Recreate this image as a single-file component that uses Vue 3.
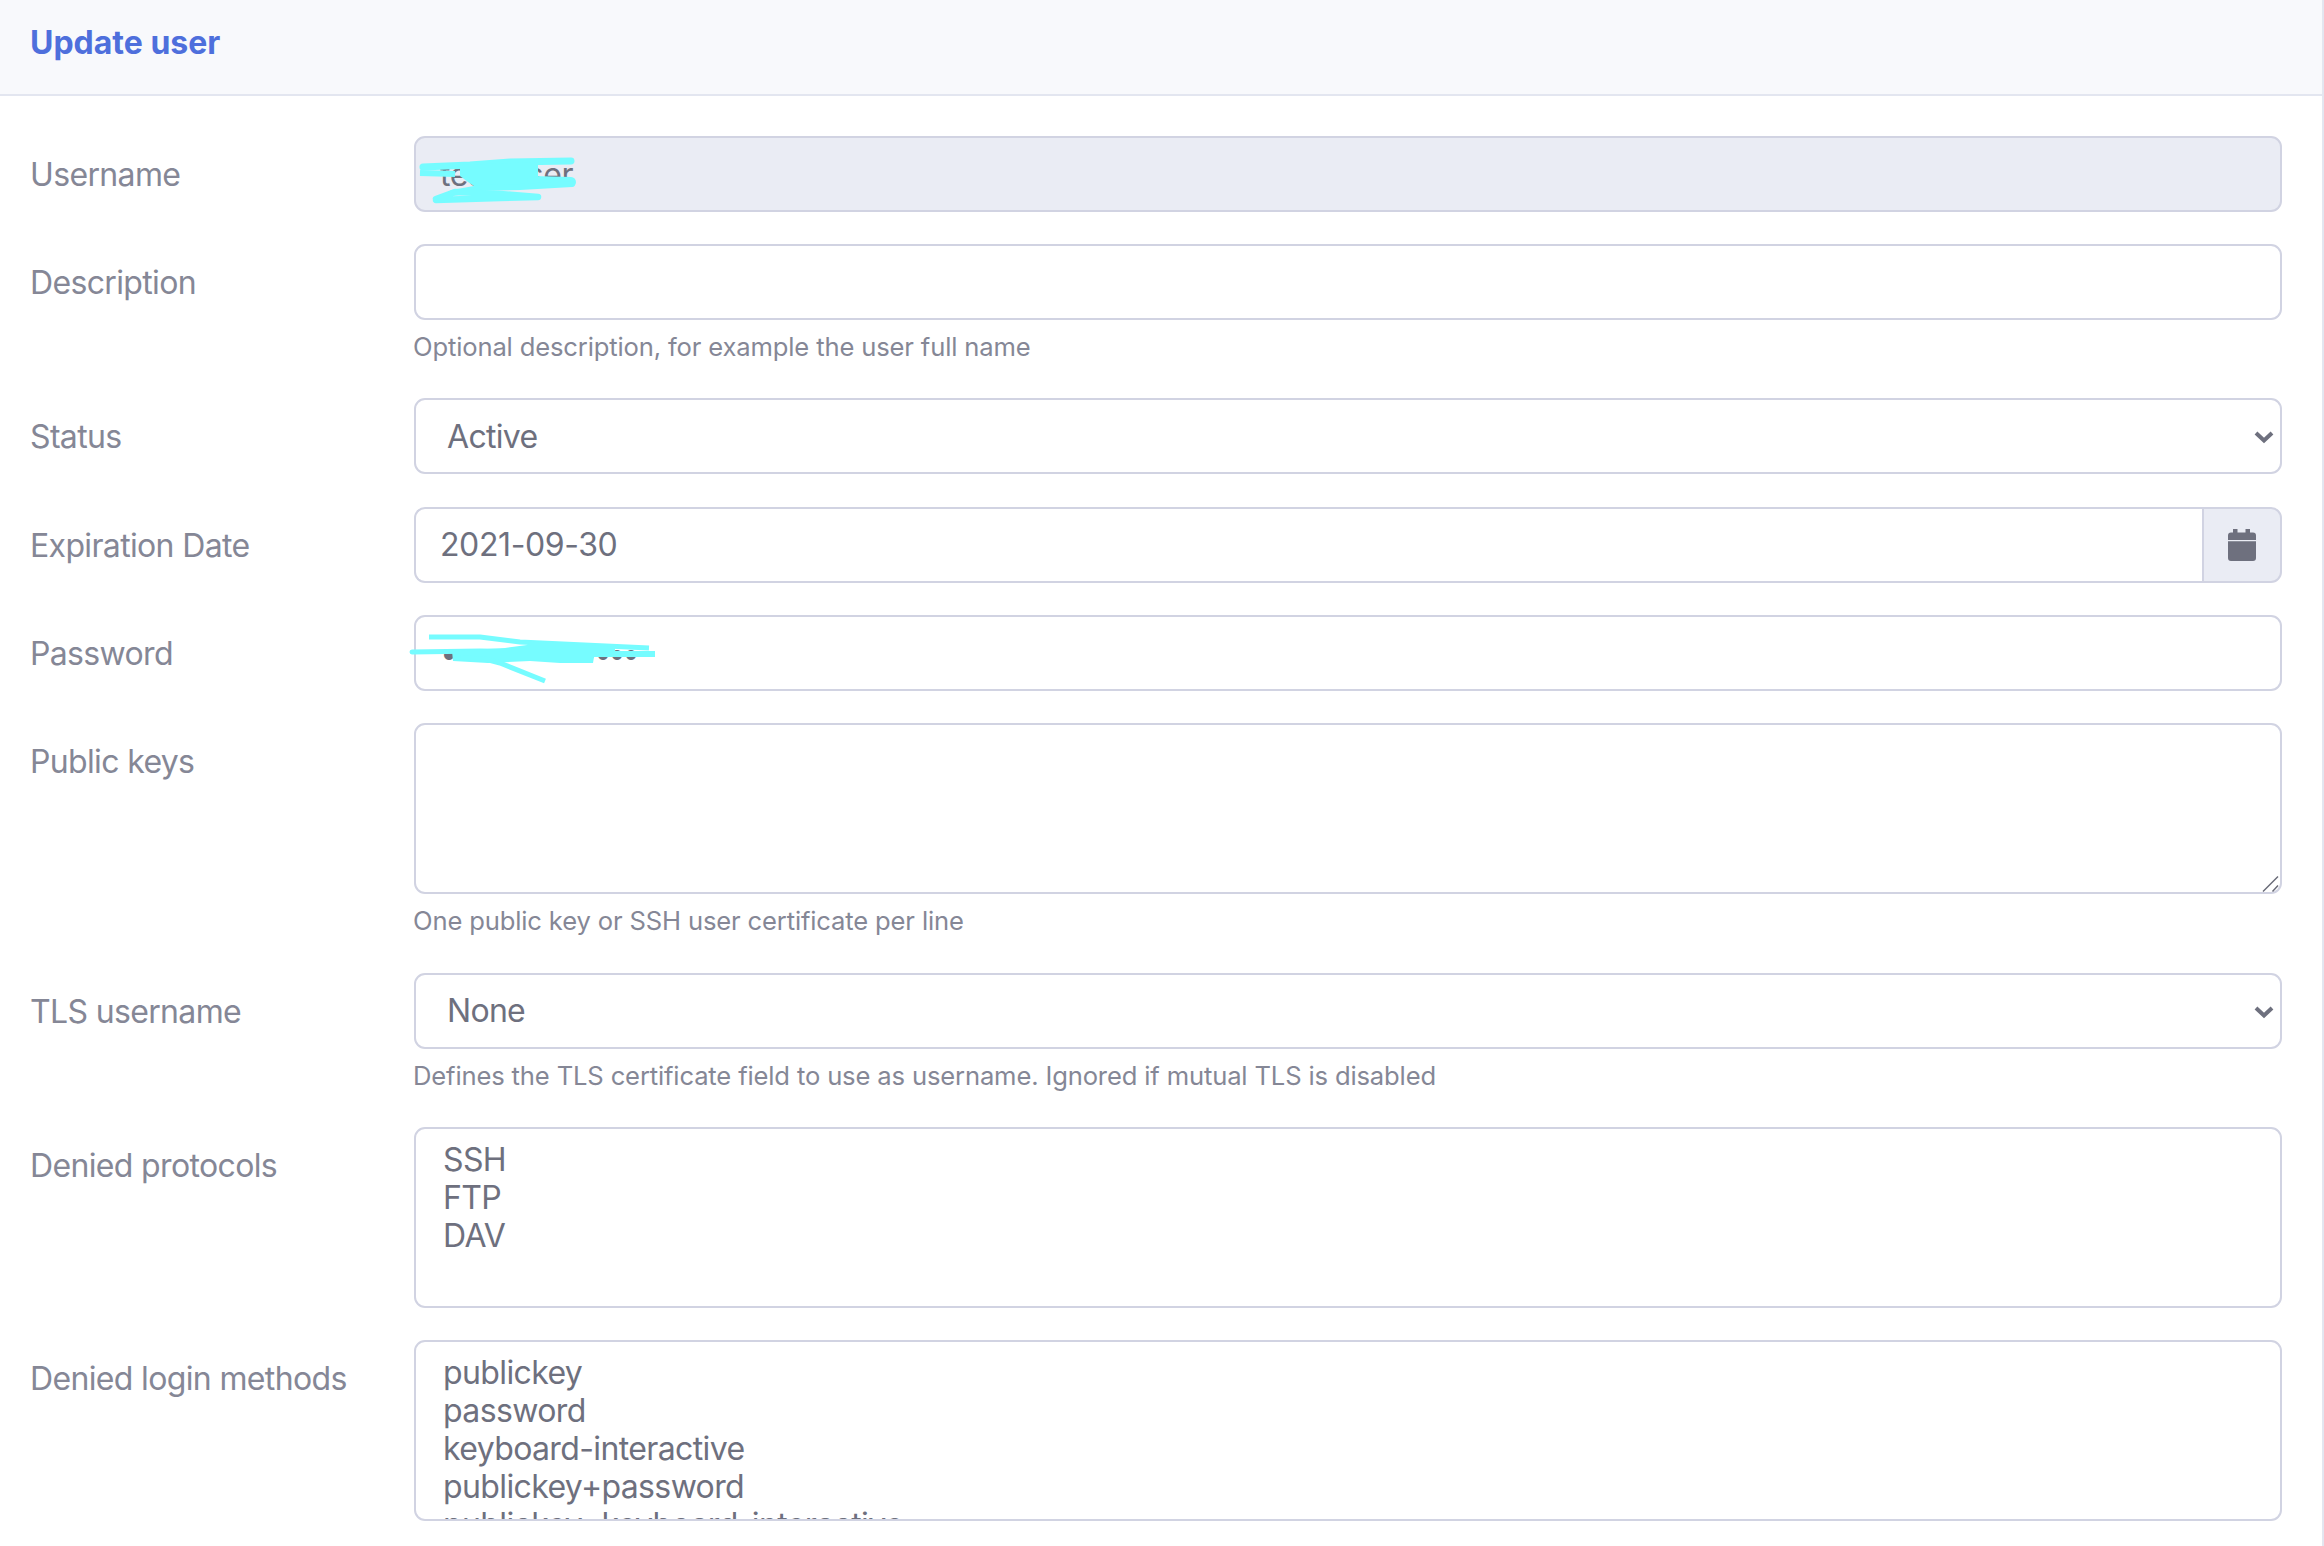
<script setup>
const loginMethods = ['publickey', 'password', 'keyboard-interactive', 'publickey+password', 'publickey+keyboard-interactive']
const protocols = ['SSH', 'FTP', 'DAV']
</script>

<template>
  <div class="card">
    <header class="card-header">
      <h1 class="card-title">Update user</h1>
    </header>
    <form class="card-body" @submit.prevent>
      <div class="row">
        <label class="label">Username</label>
        <div class="field">
          <div class="overlay-host">
            <input class="control readonly" type="text" value="test-user" readonly />
            <svg class="scribble" width="180" height="60" viewBox="0 0 180 60" aria-hidden="true">
              <g fill="none" stroke="#76fcff" stroke-linecap="round" stroke-linejoin="round">
                <path stroke-width="7" d="M13 17 L60 15 L100 12 L161 11" />
                <path stroke-width="6" stroke-linecap="butt" d="M10 23 L45 24" />
                <path fill="#76fcff" stroke="none" d="M50 15 L128 12 L128 36 L64 36 L58 32 L50 26Z" />
                <path stroke-width="10" d="M122 31 L161 32" />
                <path stroke-width="6" d="M162 34 L110 37 L70 38 L42 43" />
                <path stroke-width="6.500" d="M26 49 L45 42 L90 44 L128 47 L90 48 L26 50" />
              </g>
            </svg>
          </div>
        </div>
      </div>

      <div class="row">
        <label class="label">Description</label>
        <div class="field">
          <input class="control" type="text" />
          <small class="help">Optional description, for example the user full name</small>
        </div>
      </div>

      <div class="row">
        <label class="label">Status</label>
        <div class="field">
          <div class="overlay-host">
            <select class="control select"><option>Active</option></select>
            <svg class="chevron" width="20" height="14" viewBox="0 0 20 14" aria-hidden="true">
              <path d="M2 3 L10 10.5 L18 3" fill="none" stroke="#6e707e" stroke-width="4" />
            </svg>
          </div>
        </div>
      </div>

      <div class="row">
        <label class="label">Expiration Date</label>
        <div class="field">
          <div class="input-group">
            <input class="control group-input" type="text" value="2021-09-30" />
            <div class="append">
              <svg width="28" height="32" viewBox="0 0 28 32" aria-hidden="true">
                <path fill="#6e707e" d="M5 0h4.5v3.5h8V0H22v3.5h3a3 3 0 0 1 3 3V11H0V6.500a3 3 0 0 1 3-3h2zM0 12.300h28V29a3 3 0 0 1-3 3H3a3 3 0 0 1-3-3z" />
              </svg>
            </div>
          </div>
        </div>
      </div>

      <div class="row">
        <label class="label">Password</label>
        <div class="field">
          <div class="overlay-host">
            <input class="control password" type="password" value="password123456" />
            <svg class="scribble scribble-pass" width="270" height="66" viewBox="0 0 270 66" aria-hidden="true">
              <g fill="none" stroke="#76fcff" stroke-linejoin="round">
                <path stroke-width="5" d="M29 12 L80 12 L120 17 L249 23" />
                <path stroke-width="5" stroke-linecap="round" d="M12 27 L80 26 L130 27" />
                <path fill="#76fcff" stroke="none" d="M105 23 L127 20 L130 16 L215 22 L215 32 L194 32 L193 38 L160 38 L130 36 L88 38 L53 36 L52 26Z" />
                <path stroke-width="6" d="M190 29 L255 29" />
                <path stroke-width="5" d="M60 33 L85 34 L100 38 L145 56" />
              </g>
            </svg>
          </div>
        </div>
      </div>

      <div class="row">
        <label class="label">Public keys</label>
        <div class="field">
          <div class="overlay-host">
            <textarea class="control textarea"></textarea>
            <svg class="resizer" width="18" height="18" viewBox="0 0 18 18" aria-hidden="true">
              <path d="M1 16.500 L16 1.500 M10.500 16.500 L16 10.500" fill="none" stroke="#6a6c78" stroke-width="1.500" />
            </svg>
          </div>
          <small class="help">One public key or SSH user certificate per line</small>
        </div>
      </div>

      <div class="row">
        <label class="label">TLS username</label>
        <div class="field">
          <div class="overlay-host">
            <select class="control select"><option>None</option></select>
            <svg class="chevron" width="20" height="14" viewBox="0 0 20 14" aria-hidden="true">
              <path d="M2 3 L10 10.5 L18 3" fill="none" stroke="#6e707e" stroke-width="4" />
            </svg>
          </div>
          <small class="help">Defines the TLS certificate field to use as username. Ignored if mutual TLS is disabled</small>
        </div>
      </div>

      <div class="row">
        <label class="label">Denied protocols</label>
        <div class="field">
          <select class="control listbox" multiple>
            <option v-for="p in protocols" :key="p">{{ p }}</option>
          </select>
        </div>
      </div>

      <div class="row">
        <label class="label">Denied login methods</label>
        <div class="field">
          <select class="control listbox" multiple>
            <option v-for="m in loginMethods" :key="m">{{ m }}</option>
          </select>
        </div>
      </div>
    </form>
  </div>
</template>

<style>
html, body { margin: 0; background: #fff; overflow: hidden; }
</style>

<style scoped>
.card {
  width: 2324px;
  height: 1546px;
  box-sizing: border-box;
  border-right: 2px solid #e3e6f0;
  font-family: Inter, "Liberation Sans", sans-serif;
  color: #858796;
  overflow: hidden;
  background: #fff;
}
.card-header {
  height: 96px;
  box-sizing: border-box;
  background: #f8f9fc;
  border-bottom: 2px solid #e3e6f0;
  display: flex;
  align-items: center;
  padding: 0 30px 9px;
}
.card-title {
  margin: 0;
  font-size: 32px;
  font-weight: 700;
  color: #4e6fdc;
  letter-spacing: 0;
}
.card-body {
  padding: 40px 40px 0 30px;
  display: flex;
  flex-direction: column;
  gap: 32.2px;
}
.row {
  display: flex;
}
.label {
  flex: 0 0 384px;
  font-size: 32px;
  line-height: 48px;
  padding-top: 15px;
  letter-spacing: -0.65px;
}
.field {
  flex: 1;
  min-width: 0;
  display: flex;
  flex-direction: column;
}
.control {
  display: block;
  width: 100%;
  height: 76px;
  box-sizing: border-box;
  border: 2px solid #d1d3e2;
  border-radius: 11px;
  background: #fff;
  color: #6e707e;
  font-family: Inter, "Liberation Sans", sans-serif;
  font-size: 32px;
  padding: 0 24px;
  outline: none;
  letter-spacing: -0.4px;
}
.readonly {
  background: #eaecf4;
}
.password {
  letter-spacing: -4px;
}
.help {
  font-size: 25.6px;
  line-height: 38px;
  margin: 8px 0 0 -1px;
  color: #858796;
  letter-spacing: -0.15px;
}
.select {
  appearance: none;
  -webkit-appearance: none;
  padding: 0 31px;
  letter-spacing: -0.7px;
}
.chevron {
  position: absolute;
  right: 8.5px;
  top: 32px;
  pointer-events: none;
}
.input-group {
  display: flex;
}
.group-input {
  flex: 1;
  min-width: 0;
  border-radius: 11px 0 0 11px;
  border-right: none;
}
.append {
  flex: 0 0 80px;
  height: 76px;
  box-sizing: border-box;
  background: #eaecf4;
  border: 2px solid #d1d3e2;
  border-radius: 0 11px 11px 0;
  display: flex;
  align-items: center;
  justify-content: center;
}
.textarea {
  height: 171.5px;
  padding: 12px 24px;
  resize: none;
}
.listbox {
  height: 181px;
  padding: 11px 23px;
  overflow: hidden;
  scrollbar-width: none;
  letter-spacing: -0.62px;
}
.listbox option {
  padding: 0 4px;
  line-height: 38px;
  min-height: 38px;
  height: 38px;
}
.overlay-host {
  position: relative;
}
.scribble {
  position: absolute;
  left: -4px;
  top: 14px;
  pointer-events: none;
}
.scribble-pass {
  left: -14px;
  top: 10px;
}
.resizer {
  position: absolute;
  right: 2px;
  bottom: 1px;
  pointer-events: none;
}
</style>
